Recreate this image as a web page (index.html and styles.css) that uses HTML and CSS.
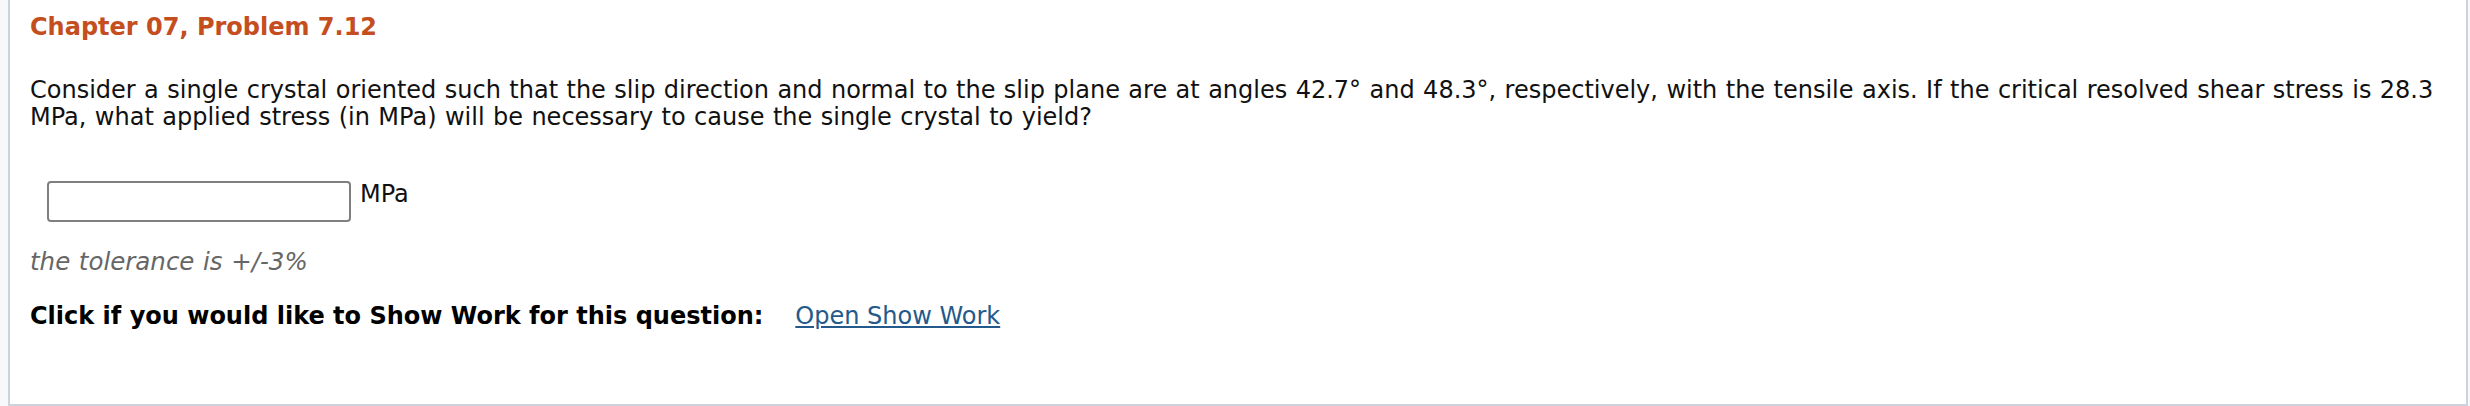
FILE: index.html
```html
<!DOCTYPE html>
<html>
<head>
<meta charset="utf-8">
<link rel="stylesheet" href="styles.css">
</head>
<body>
<div class="panel">
  <h2 class="title">Chapter 07, Problem 7.12</h2>
  <p class="question">Consider a single crystal oriented such that the slip direction and normal to the slip plane are at angles 42.7° and 48.3°, respectively, with the tensile axis. If the critical resolved shear stress is 28.3 MPa, what applied stress (in MPa) will be necessary to cause the single crystal to yield?</p>
  <div class="answer">
    <input class="field" type="text">
    <span class="unit">MPa</span>
  </div>
  <p class="tolerance">the tolerance is +/-3%</p>
  <div class="work">
    <span class="work-label">Click if you would like to Show Work for this question:</span>
    <a class="work-link" href="#">Open Show Work</a>
  </div>
</div>
</body>
</html>
```

FILE: styles.css
```css
html, body {
  margin: 0;
  padding: 0;
  background: #f7f8fa;
}
body {
  width: 2470px;
  height: 406px;
  overflow: hidden;
  font-family: "DejaVu Sans", Verdana, sans-serif;
  color: #000;
}
.panel {
  box-sizing: border-box;
  margin-left: 8px;
  width: 2460px;
  height: 406px;
  background: #fff;
  border-left: 2px solid #ccd3df;
  border-right: 2px solid #ccd3df;
  border-bottom: 2px solid #ccd3df;
  padding: 14px 20px 0 20px;
}
.title {
  margin: 0;
  font-size: 24px;
  line-height: 27px;
  font-weight: bold;
  color: #c54e1e;
}
.question {
  margin: 36px 0 0 0;
  font-size: 24px;
  line-height: 27px;
  word-spacing: 0.8px;
  color: #111;
}
.answer {
  display: flex;
  align-items: flex-start;
  margin: 50px 0 0 17px;
}
.field {
  box-sizing: border-box;
  width: 304px;
  height: 41px;
  margin: 0;
  border: 2px solid #7f7f7f;
  border-radius: 4px;
  background: #fff;
  padding: 0 6px;
  font-size: 20px;
}
.unit {
  margin-left: 9px;
  font-size: 24px;
  line-height: 27px;
  color: #111;
}
.tolerance {
  margin: 26px 0 0 0;
  font-size: 24.5px;
  line-height: 27px;
  word-spacing: 0.8px;
  font-style: italic;
  color: #666;
}
.work {
  margin-top: 28px;
  font-size: 24px;
  line-height: 27px;
  display: flex;
  gap: 32px;
}
.work-label {
  font-weight: bold;
}
.work-link {
  color: #235a8b;
  text-decoration: underline;
}
```
